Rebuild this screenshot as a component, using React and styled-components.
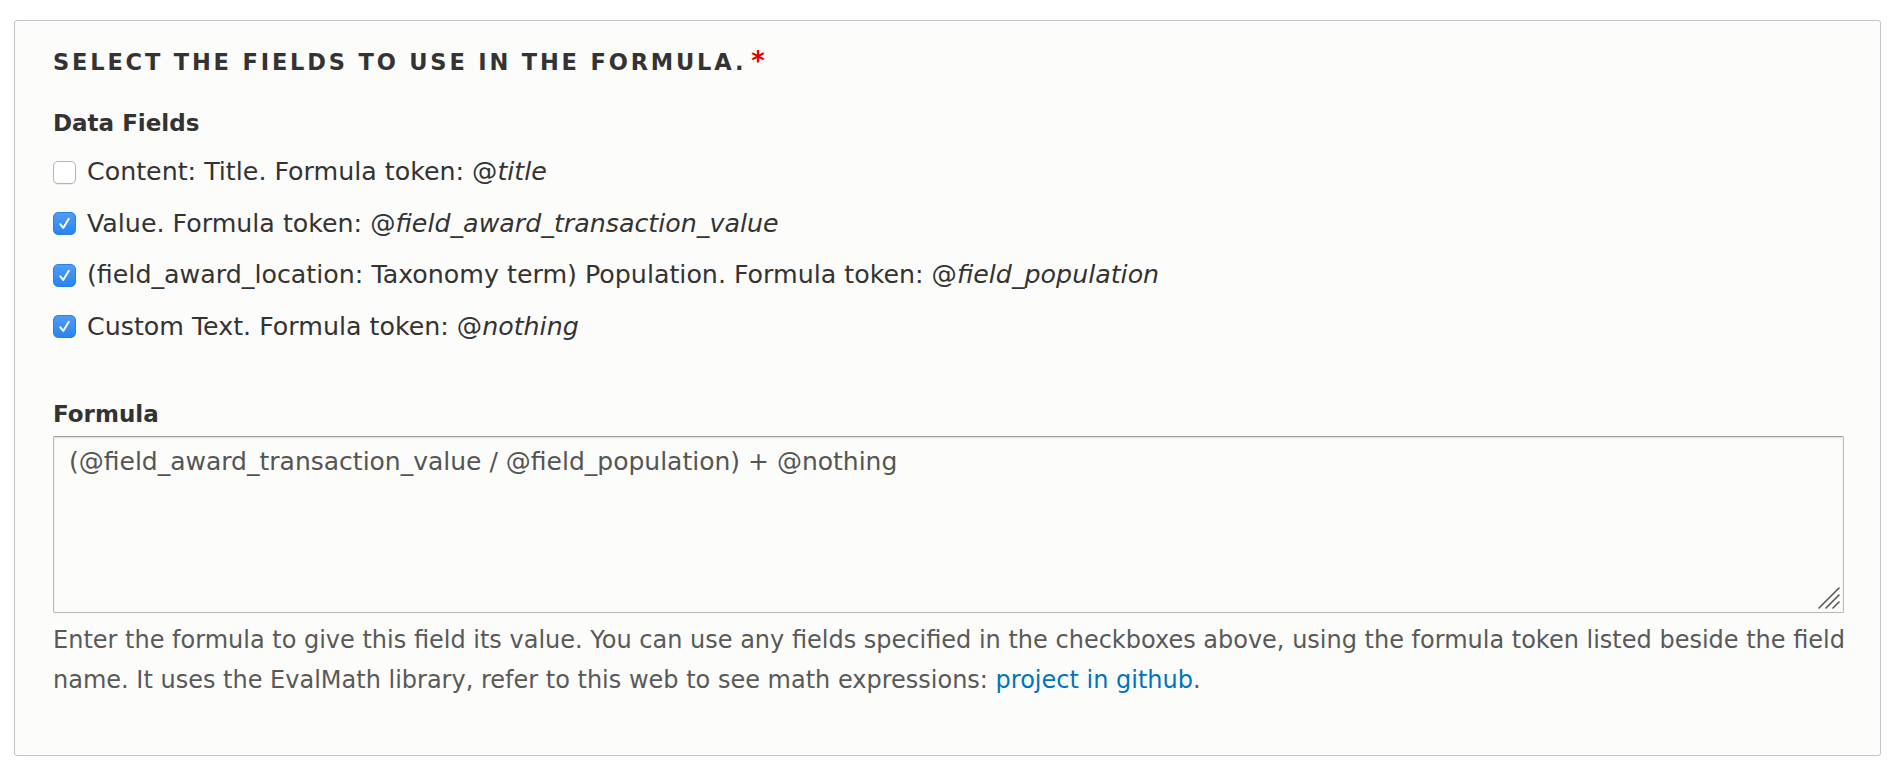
import React from "react";
import styled, { createGlobalStyle } from "styled-components";

const Global = createGlobalStyle`
  html, body { margin: 0; padding: 0; background: #ffffff; }
  body { font-family: "DejaVu Sans", "Liberation Sans", sans-serif; color: #333; }
`;

const Fieldset = styled.section`
  box-sizing: border-box;
  margin: 20px 19px 0 14px;
  width: 1867px;
  height: 736px;
  border: 1px solid #c4c4c4;
  border-radius: 3px;
  background: #fcfcfa;
  padding: 25.7px 37px 0 38px;
`;

const Legend = styled.h2`
  margin: 0;
  font-size: 22.5px;
  line-height: 28px;
  font-weight: 700;
  letter-spacing: 2.83px;
  text-transform: uppercase;
  color: #333;
  white-space: nowrap;
`;

const Required = styled.span`
  color: #e00000;
  font-size: 26px;
  margin-left: 5px;
  letter-spacing: 0;
`;

const GroupLabel = styled.div`
  margin-top: 30px;
  font-size: 23px;
  line-height: 34px;
  font-weight: 700;
  color: #333;
`;

const Options = styled.div`
  margin-top: 6.7px;
  display: flex;
  flex-direction: column;
`;

const Option = styled.label`
  display: flex;
  align-items: center;
  height: 51.5px;
  font-size: 25.3px;
  line-height: 51.5px;
  color: #333;
  white-space: nowrap;
`;

const Box = styled.span`
  box-sizing: border-box;
  flex: none;
  width: 23px;
  height: 23px;
  margin-right: 11px;
  border-radius: 5px;
  display: flex;
  align-items: center;
  justify-content: center;
  background: ${(p) => (p.$checked ? "linear-gradient(#4c9df8, #2a83f0)" : "#ffffff")};
  border: 1px solid ${(p) => (p.$checked ? "#2a80ea" : "#b3b3b3")};
  box-shadow: ${(p) => (p.$checked ? "none" : "0 1px 1px rgba(0,0,0,0.06)")};
`;

const Token = styled.em`
  font-style: italic;
`;

const FieldLabel = styled.div`
  margin-top: 44.3px;
  font-size: 23px;
  line-height: 34px;
  font-weight: 700;
  color: #333;
`;

const TextArea = styled.div`
  box-sizing: border-box;
  position: relative;
  margin-top: 5px;
  width: 1791px;
  height: 177px;
  border: 1px solid #b8b8b8;
  border-top-color: #9a9a9a;
  border-radius: 2px;
  box-shadow: inset 0 1px 2px rgba(0, 0, 0, 0.125);
  background: #fcfcfa;
  padding: 8px 15px;
  font-size: 25px;
  line-height: 34px;
  color: #555;
  white-space: nowrap;
`;

const Grip = styled.svg`
  position: absolute;
  right: 2px;
  bottom: 2px;
`;

const Description = styled.p`
  margin: 7.3px 0 0;
  width: 1800px;
  font-size: 24px;
  line-height: 40.3px;
  color: #595959;
`;

const Link = styled.a`
  color: #0074bd;
  text-decoration: none;
`;

const Check = () => (
  <svg width="17" height="17" viewBox="0 0 17 17">
    <path d="M4.2 9.2 L7.2 13 L12.8 3.8" fill="none" stroke="#fff" strokeWidth="2" strokeLinecap="round" strokeLinejoin="round" />
  </svg>
);

const fields = [
  { checked: false, text: "Content: Title. Formula token: @", token: "title" },
  { checked: true, text: "Value. Formula token: @", token: "field_award_transaction_value" },
  {
    checked: true,
    text: "(field_award_location: Taxonomy term) Population. Formula token: @",
    token: "field_population",
  },
  { checked: true, text: "Custom Text. Formula token: @", token: "nothing" },
];

export default function App() {
  return (
    <>
      <Global />
      <Fieldset>
        <Legend>
          Select the fields to use in the formula.<Required>*</Required>
        </Legend>
        <GroupLabel>Data Fields</GroupLabel>
        <Options>
          {fields.map((f) => (
            <Option key={f.token}>
              <Box $checked={f.checked}>{f.checked && <Check />}</Box>
              <span>
                {f.text}
                <Token>{f.token}</Token>
              </span>
            </Option>
          ))}
        </Options>
        <FieldLabel>Formula</FieldLabel>
        <TextArea>
          (@field_award_transaction_value / @field_population) + @nothing
          <Grip width="26" height="26" viewBox="0 0 26 26">
            <g stroke="#555" strokeWidth="1.6" strokeLinecap="round">
              <line x1="4" y1="24" x2="24" y2="4" />
              <line x1="11" y1="24" x2="24" y2="11" />
              <line x1="18" y1="24" x2="24" y2="18" />
            </g>
          </Grip>
        </TextArea>
        <Description>
          Enter the formula to give this field its value. You can use any fields specified in the
          checkboxes above, using the formula token listed beside the field name. It uses the EvalMath
          library, refer to this web to see math expressions: <Link href="#">project in github</Link>.
        </Description>
      </Fieldset>
    </>
  );
}
